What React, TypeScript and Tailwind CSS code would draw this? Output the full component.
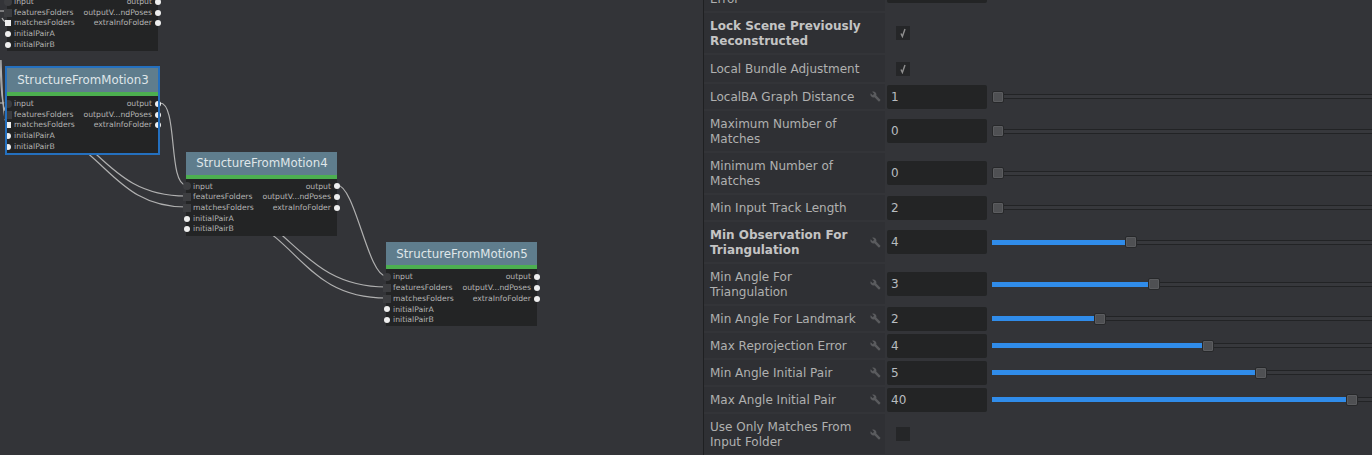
import React from "react";
import { MdBuild } from "react-icons/md";

const font = "font-['DejaVu_Sans',sans-serif]";

type Port = "dark" | "square" | "white" | "whiteSquare";

interface NodeProps {
  title: string;
  className: string;
  selected?: boolean;
  matches?: Port;
}

function PortDot({ kind }: { kind: Port }) {
  if (kind === "dark") return <span className="block w-[8px] h-[8px] rounded-full bg-[#3c3d40]" />;
  if (kind === "square") return <span className="block w-[8px] h-[8px] bg-[#3c3d40]" />;
  if (kind === "whiteSquare") return <span className="block w-[6px] h-[6px] mx-[1px] bg-[#eeeeee]" />;
  return <span className="block w-[6px] h-[6px] mx-[1px] rounded-full bg-[#eeeeee]" />;
}

function GraphNode({ title, className, selected, matches = "square" }: NodeProps) {
  const inputs: [string, Port][] = [
    ["input", "dark"],
    ["featuresFolders", "square"],
    ["matchesFolders", matches],
    ["initialPairA", "white"],
    ["initialPairB", "white"],
  ];
  const outputs = ["output", "outputV...ndPoses", "extraInfoFolder"];
  return (
    <div className={`absolute w-[151px] h-[84px] bg-[#232425] ${selected ? "outline-2 outline-[#2470bf]" : ""} ${className}`}>
      <div className={`${selected ? "h-[24px]" : "h-[23px]"} bg-[#5f7d8d] flex items-center justify-center pl-px pt-[2px] text-[11.8px] text-[#dfe6e9]`}>{title}</div>
      <div className="h-[4px] bg-[#4caf50]" />
      <div className={`flex justify-between ${selected ? "pt-[2.5px]" : "pt-[2.5px]"} text-[7.7px] text-[#b4b4b4]`}>
        <div className="flex flex-col -ml-[3px]">
          {inputs.map(([name, kind]) => (
            <div key={name} className="h-[10.7px] flex items-center gap-[2px]">
              <PortDot kind={kind} />
              <span>{name}</span>
            </div>
          ))}
        </div>
        <div className="flex flex-col items-end -mr-[4px]">
          {outputs.map((name) => (
            <div key={name} className="h-[10.7px] flex items-center gap-[2px]">
              <span>{name}</span>
              <PortDot kind="white" />
            </div>
          ))}
        </div>
      </div>
    </div>
  );
}

interface RowData {
  label: string[];
  bold?: boolean;
  wrench?: boolean;
  value?: string;
  check?: boolean;
  fill?: number;
  height: string;
}

const rows: RowData[] = [
  { label: ["Localizer Max Ransac", "Error"], value: "", fill: 0, height: "h-[40px]" },
  { label: ["Lock Scene Previously", "Reconstructed"], bold: true, check: true, height: "h-[40px]" },
  { label: ["Local Bundle Adjustment"], check: true, height: "h-[27px]" },
  { label: ["LocalBA Graph Distance"], wrench: true, value: "1", fill: 0, height: "h-[25px]" },
  { label: ["Maximum Number of", "Matches"], value: "0", fill: 0, height: "h-[40px]" },
  { label: ["Minimum Number of", "Matches"], value: "0", fill: 0, height: "h-[40px]" },
  { label: ["Min Input Track Length"], value: "2", fill: 0, height: "h-[25px]" },
  { label: ["Min Observation For", "Triangulation"], bold: true, wrench: true, value: "4", fill: 133, height: "h-[40px]" },
  { label: ["Min Angle For", "Triangulation"], wrench: true, value: "3", fill: 156, height: "h-[40px]" },
  { label: ["Min Angle For Landmark"], wrench: true, value: "2", fill: 102, height: "h-[25px]" },
  { label: ["Max Reprojection Error"], wrench: true, value: "4", fill: 210, height: "h-[25px]" },
  { label: ["Min Angle Initial Pair"], wrench: true, value: "5", fill: 263, height: "h-[25px]" },
  { label: ["Max Angle Initial Pair"], wrench: true, value: "40", fill: 354, height: "h-[25px]" },
  { label: ["Use Only Matches From", "Input Folder"], wrench: true, check: false, height: "h-[40px]" },
];

function Slider({ fill }: { fill: number }) {
  return (
    <div className="flex-1 ml-[5px] flex items-center">
      <div className="h-[5px] bg-[#308cea]" style={{ width: fill }} />
      <div className="w-[12px] h-[12px] shrink-0 rounded-[2px] bg-[#4f5053] border border-[#27282a] shadow-[inset_0_0_0_1px_#5b5c5f]" />
      <div className="flex-1 h-[5px] bg-[#37383c] border-y border-[#222325]" />
    </div>
  );
}

function Row({ row }: { row: RowData }) {
  const isCheck = row.check !== undefined;
  return (
    <div className={`flex shrink-0 ${row.height}`}>
      <div className="w-[181px] shrink-0 mr-[2px] bg-[#2f3034] flex items-center pl-[6px] pr-[4px]">
        <div className={`flex-1 pt-[2px] text-[12px] leading-[15px] ${row.bold ? "font-bold text-[#c4c4c4]" : "text-[#b0b0b0]"}`}>
          {row.label.map((line) => (
            <div key={line} className="whitespace-nowrap">{line}</div>
          ))}
        </div>
        {row.wrench && <MdBuild className="w-[11px] h-[11px] text-[#5a5b5e]" />}
      </div>
      {isCheck ? (
        <div className="flex items-center pl-[9px]">
          <div className="w-[14px] h-[14px] bg-[#252628] flex items-center justify-center">
            {row.check && (
              <svg width="8" height="10" viewBox="0 0 8 10" fill="none">
                <path d="M2 5.5 L3.4 8.5 L6 1" stroke="#8f8f8f" strokeWidth="1.4" />
              </svg>
            )}
          </div>
        </div>
      ) : (
        <div className="flex-1 flex items-center">
          <div className="w-[100px] h-[24px] rounded-[2px] bg-[#232425] flex items-center pl-[4px] text-[12px] text-[#b8bcc0]">
            {row.value}
          </div>
          <Slider fill={row.fill ?? 0} />
        </div>
      )}
    </div>
  );
}

export default function App() {
  return (
    <div className={`flex w-[1372px] h-[455px] overflow-hidden bg-[#333438] ${font}`}>
      <div className="relative w-[703px] h-full shrink-0 overflow-hidden">
        <svg className="absolute inset-0" width="703" height="455" fill="none" stroke="#b0b0b0" strokeWidth="1.2">
          <path d="M160 103 C 178 103, 168 185, 186 185" />
          <path d="M8 114 C 98 114, 96 196, 186 196" />
          <path d="M8 125 C 105 125, 102 207, 186 207" />
          <path d="M337 185 C 355 185, 368 276, 386 276" />
          <path d="M186 196 C 290 196, 290 287, 386 287" />
          <path d="M186 207 C 300 207, 288 298, 386 298" />
          <path d="M0 60 C 1 90, 2 108, 7 114" />
          <path d="M1 60 C 2 90, 3 118, 7 125" />
          <path d="M0 103 L 6 103" />
          <path d="M0 11 L 6 11" />
          <path d="M2 18 C 3 20, 4 22, 7 22" />
        </svg>
        <GraphNode title="StructureFromMotion2" className="left-[7px] top-[-33px]" matches="whiteSquare" />
        <GraphNode title="StructureFromMotion3" className="left-[7px] top-[68px] h-[85px]" selected matches="whiteSquare" />
        <GraphNode title="StructureFromMotion4" className="left-[186px] top-[151.6px]" />
        <GraphNode title="StructureFromMotion5" className="left-[386px] top-[242.4px]" />
      </div>
      <div className="w-px shrink-0 bg-[#1f2022]" />
      <div className="flex-1 min-w-0 flex flex-col gap-[2px] -mt-[29px]">
        {rows.map((row) => (
          <Row key={row.label.join(" ")} row={row} />
        ))}
      </div>
    </div>
  );
}
